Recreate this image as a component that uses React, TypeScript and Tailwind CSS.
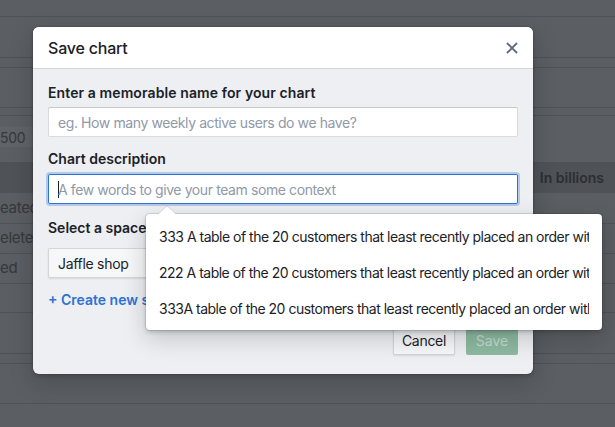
import React from "react";

const font = { fontFamily: "Inter, 'Noto Sans', sans-serif" };

function BgRow({ h, border = true, children, className = "" }: { h: string; border?: boolean; children?: React.ReactNode; className?: string }) {
  return (
    <div className={`${h} box-border ${border ? "border-b border-[#4e5155]" : ""} flex items-center ${className}`}>
      {children}
    </div>
  );
}

export default function App() {
  const items = [
    "333 A table of the 20 customers that least recently placed an order with us",
    "222 A table of the 20 customers that least recently placed an order with us",
    "333A table of the 20 customers that least recently placed an order with us",
  ];
  return (
    <div className="relative w-[615px] h-[427px] overflow-hidden bg-[#5b5e62] text-[14px]" style={font}>
      {/* background page (dimmed) */}
      <div className="flex flex-col w-full">
        <BgRow h="h-[17px]" />
        <BgRow h="h-[41px]" />
        <BgRow h="h-[10px]" />
        <BgRow h="h-[40px]" />
        <BgRow h="h-[8px]" />
        <BgRow h="h-[46px]" border={false} className="items-start pt-[11px]">
          <div className="h-[20px] w-[40px] bg-[#606367] flex items-center text-[#35383c] tracking-[-0.3px]">
            <span>500</span>
            <span className="ml-[7px] text-[8px]">▼</span>
          </div>
        </BgRow>
        <BgRow h="h-[31px]" border={false} className="bg-[#4f5256] justify-end pr-[11px]">
          <span className="font-semibold text-[#2b2e32] text-[14px]">In billions</span>
        </BgRow>
        <BgRow h="h-[31px]">
          <span className="text-[#35383c] text-[15px] tracking-[-0.3px]">eated</span>
        </BgRow>
        <BgRow h="h-[30px]">
          <span className="text-[#35383c] text-[15px] tracking-[-0.3px]">eleted</span>
        </BgRow>
        <BgRow h="h-[30px]">
          <span className="text-[#35383c] text-[15px] tracking-[-0.3px]">ed</span>
        </BgRow>
        <BgRow h="h-[29px]" />
        <BgRow h="h-[41px]" />
        <BgRow h="h-[10px]" />
        <BgRow h="h-[40px]" />
      </div>

      {/* modal */}
      <div className="absolute left-[33px] top-[27px] w-[500px] rounded-[6px] bg-[#edeff2] shadow-[0_0_0_1px_rgba(17,20,24,0.1),0_2px_4px_rgba(17,20,24,0.2),0_8px_24px_rgba(17,20,24,0.2)]">
        <div className="h-[42px] box-border flex items-center justify-between bg-white rounded-t-[6px] border-b border-[#d3d6da] pl-[15px] pr-[15px]">
          <span className="text-[16px] font-medium text-[#1c2127] tracking-[-0.2px]">Save chart</span>
          <svg width="12" height="12" viewBox="0 0 12 12">
            <path d="M1.5 1.5 L10.5 10.5 M10.5 1.5 L1.5 10.5" stroke="#5f6b7c" strokeWidth="1.8" strokeLinecap="round" />
          </svg>
        </div>
        <div className="px-[15px] pt-[15px] pb-[19px] flex flex-col">
          <label className="font-semibold text-[#1c2127] leading-[18px] tracking-[0.1px]">Enter a memorable name for your chart</label>
          <div className="mt-[5px] h-[30px] bg-white rounded-[2px] shadow-[inset_0_0_0_1px_rgba(17,20,24,0.15),inset_0_1px_1px_rgba(17,20,24,0.1)] flex items-center px-[10px] text-[#8f99a8] tracking-[-0.4px]">
            eg. How many weekly active users do we have?
          </div>
          <label className="mt-[13px] font-semibold text-[#1c2127] leading-[18px]">Chart description</label>
          <div className="relative mt-[6px] h-[30px] bg-white rounded-[2px] shadow-[inset_0_0_0_1px_#2d72d2,0_0_0_2px_rgba(45,114,210,0.3)] flex items-center px-[10px] text-[#8f99a8] tracking-[-0.4px]">
            <span className="w-[1px] h-[17px] bg-[#1c2127] mr-[-1px]" />
            A few words to give your team some context
            {/* popover */}
            <div className="absolute left-[98px] top-[40px] w-[456px] z-10 tracking-[-0.5px]">
              <svg width="20" height="10" viewBox="0 0 20 10" className="absolute left-[11px] top-[-9px]">
                <path d="M0 10 L10 1 L20 10 Z" fill="#ffffff" stroke="rgba(17,20,24,0.12)" strokeWidth="1" />
                <rect x="0" y="9" width="20" height="2" fill="#ffffff" />
              </svg>
              <div className="bg-white rounded-[4px] shadow-[0_0_0_1px_rgba(17,20,24,0.1),0_2px_4px_rgba(17,20,24,0.2),0_8px_24px_rgba(17,20,24,0.2)] py-[4px] px-[13px] overflow-hidden">
                {items.map((t) => (
                  <div key={t} className="h-[36px] flex items-center whitespace-nowrap overflow-hidden text-[#1c2127]">
                    {t}
                  </div>
                ))}
              </div>
            </div>
          </div>
          <label className="mt-[15px] font-semibold text-[#1c2127] leading-[18px]">Select a space</label>
          <div className="mt-[11px] h-[30px] bg-[#f6f7f9] rounded-[2px] shadow-[inset_0_0_0_1px_rgba(17,20,24,0.15),0_1px_2px_rgba(17,20,24,0.1)] flex items-center px-[10px] text-[#1c2127] tracking-[-0.3px]">
            Jaffle shop
          </div>
          <div className="mt-[13px] leading-[18px] font-semibold text-[#2d72d2]">+ Create new space</div>
          <div className="mt-[16px] flex justify-end gap-[11px]">
            <button className="h-[30px] w-[62px] rounded-[2px] bg-[#f6f7f9] text-[#1c2127] tracking-[-0.3px] shadow-[inset_0_0_0_1px_rgba(17,20,24,0.15),0_1px_2px_rgba(17,20,24,0.1)]">
              Cancel
            </button>
            <button className="h-[30px] w-[52px] rounded-[2px] bg-[#8db9a0] text-[#c4dacd]">Save</button>
          </div>
        </div>
      </div>
    </div>
  );
}
